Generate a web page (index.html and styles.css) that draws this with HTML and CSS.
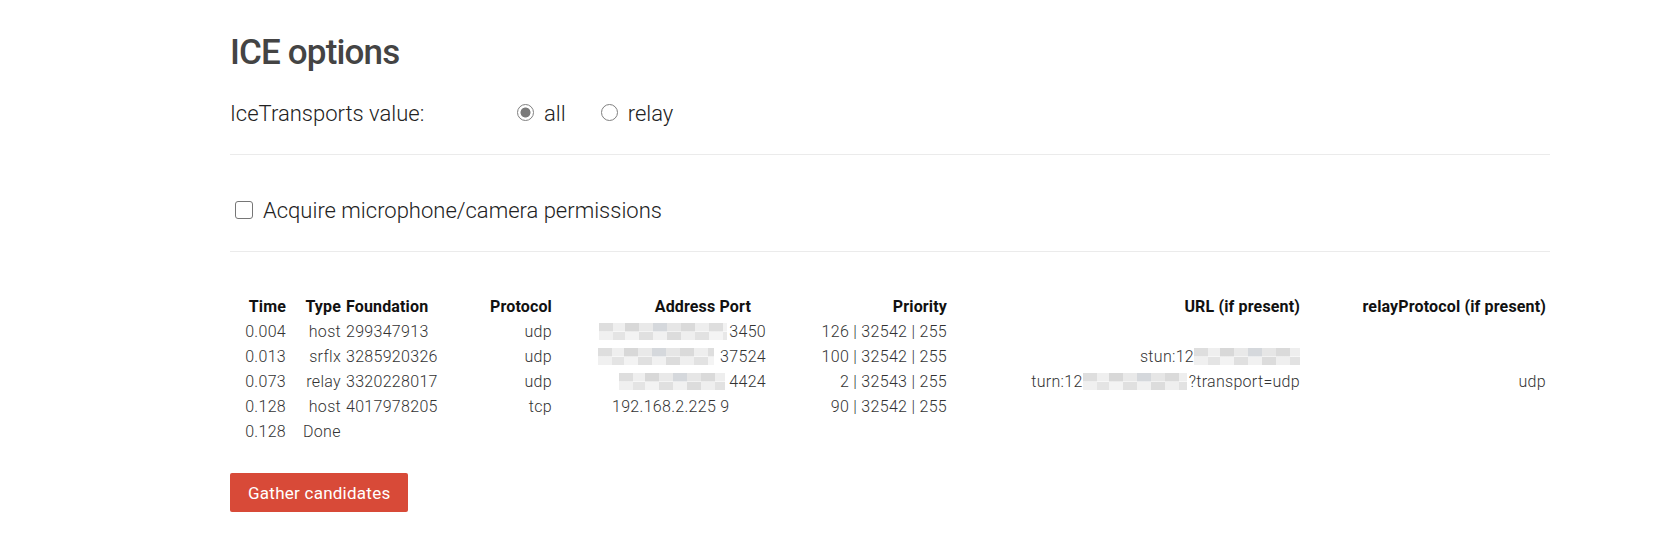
FILE: index.html
```
<!DOCTYPE html>
<html lang="en">
<head>
<meta charset="utf-8">
<title>Trickle ICE</title>
<link rel="stylesheet" href="styles.css">
</head>
<body>
<div class="container">
  <h2 class="title">ICE options</h2>
  <div class="option-row">
    <span class="option-label">IceTransports value:</span>
    <label class="choice"><input type="radio" name="transport" class="radio" checked><span>all</span></label>
    <label class="choice"><input type="radio" name="transport" class="radio"><span>relay</span></label>
  </div>
  <hr class="rule rule-1">
  <label class="check-row"><input type="checkbox" class="check"><span>Acquire microphone/camera permissions</span></label>
  <hr class="rule rule-2">
  <table class="candidates">
    <colgroup>
      <col class="c-time"><col class="c-type"><col class="c-found"><col class="c-proto"><col class="c-addr"><col class="c-prio"><col class="c-url"><col class="c-relay">
    </colgroup>
    <thead>
      <tr>
        <th class="r">Time</th>
        <th class="r">Type</th>
        <th class="l found">Foundation</th>
        <th class="r">Protocol</th>
        <th class="r addr-head">Address Port</th>
        <th class="r">Priority</th>
        <th class="r">URL (if present)</th>
        <th class="r">relayProtocol (if present)</th>
      </tr>
    </thead>
    <tbody>
      <tr>
        <td class="r">0.004</td>
        <td class="r">host</td>
        <td class="l found">299347913</td>
        <td class="r">udp</td>
        <td class="r"><span class="mosaic m-a1"></span>3450</td>
        <td class="r">126 | 32542 | 255</td>
        <td class="r"></td>
        <td class="r"></td>
      </tr>
      <tr>
        <td class="r">0.013</td>
        <td class="r">srflx</td>
        <td class="l found">3285920326</td>
        <td class="r">udp</td>
        <td class="r"><span class="mosaic m-a2"></span> 37524</td>
        <td class="r">100 | 32542 | 255</td>
        <td class="r">stun:12<span class="mosaic m-u1"></span></td>
        <td class="r"></td>
      </tr>
      <tr>
        <td class="r">0.073</td>
        <td class="r">relay</td>
        <td class="l found">3320228017</td>
        <td class="r">udp</td>
        <td class="r"><span class="mosaic m-a3"></span>4424</td>
        <td class="r">2 | 32543 | 255</td>
        <td class="r">turn:12<span class="mosaic m-u2"></span>?transport=udp</td>
        <td class="r">udp</td>
      </tr>
      <tr>
        <td class="r">0.128</td>
        <td class="r">host</td>
        <td class="l found">4017978205</td>
        <td class="r">tcp</td>
        <td class="l addr-local">192.168.2.225 9</td>
        <td class="r">90 | 32542 | 255</td>
        <td class="r"></td>
        <td class="r"></td>
      </tr>
      <tr>
        <td class="r">0.128</td>
        <td class="l done" colspan="7">Done</td>
      </tr>
    </tbody>
  </table>
  <button class="gather" type="button">Gather candidates</button>
</div>
</body>
</html>
```

FILE: styles.css
```
html, body {
  margin: 0;
  padding: 0;
  background: #ffffff;
}

body {
  font-family: Roboto, "Liberation Sans", Arial, sans-serif;
  font-weight: 300;
  color: #333333;
}

.container {
  margin-left: 230px;
  width: 1320px;
  padding-top: 33px;
}

.title {
  margin: 0;
  font-size: 35px;
  line-height: 40px;
  font-weight: 500;
  letter-spacing: -0.85px;
  color: #444444;
}

.option-row {
  display: flex;
  align-items: center;
  margin-top: 29px;
  font-size: 22px;
  line-height: 24px;
  color: #222222;
}

.option-label {
  width: 287px;
}

.choice {
  display: flex;
  align-items: center;
  gap: 10px;
  margin-right: 35px;
}

.radio {
  appearance: none;
  -webkit-appearance: none;
  box-sizing: border-box;
  width: 17px;
  height: 17px;
  margin: 0 0 4px 0;
  border: 1.5px solid #808080;
  border-radius: 50%;
  background: #ffffff;
}

.radio:checked {
  background: radial-gradient(circle, #7a7a7a 0 4.6px, #ffffff 5.4px);
}

.rule {
  margin: 0;
  border: none;
  border-top: 1px solid #ebebeb;
  height: 0;
}

.rule-1 {
  margin-top: 28px;
}

.check-row {
  display: flex;
  align-items: center;
  gap: 10px;
  margin-top: 44px;
  padding-left: 5px;
  font-size: 22px;
  line-height: 24px;
  color: #222222;
}

.check {
  appearance: none;
  -webkit-appearance: none;
  box-sizing: border-box;
  width: 18px;
  height: 18px;
  margin: 0 0 3px 0;
  border: 1.5px solid #767676;
  border-radius: 3px;
  background: #ffffff;
}

.rule-2 {
  margin-top: 28px;
}

.candidates {
  margin-top: 42px;
  table-layout: fixed;
  width: 1316px;
  border-collapse: collapse;
  border-spacing: 0;
  font-size: 16px;
  line-height: 25px;
  letter-spacing: 0.3px;
}

.c-time { width: 56px; }
.c-type { width: 55px; }
.c-found { width: 139px; }
.c-proto { width: 72px; }
.c-addr { width: 214px; }
.c-prio { width: 181px; }
.c-url { width: 353px; }
.c-relay { width: 246px; }

.candidates th,
.candidates td {
  padding: 0;
  white-space: nowrap;
  vertical-align: baseline;
}

.candidates th {
  font-weight: 700;
  color: #111111;
  letter-spacing: 0.15px;
}

.candidates td {
  font-weight: 300;
  color: #333333;
}

.r { text-align: right; }
.l { text-align: left; }

.found { padding-left: 5px !important; }
.addr-head { padding-right: 15px !important; }
.addr-local { padding-left: 60px !important; }
.done { padding-left: 17px !important; }

.mosaic {
  display: inline-block;
  height: 17px;
  vertical-align: -3px;
  background-image:
    linear-gradient(90deg, #dedede 0 14px, #efefef 14px 26px, #d8d8d8 26px 40px, #e9e9e9 40px 54px, #d5d8dc 54px 68px, #e6e6e6 68px 82px, #dadada 82px 96px, #eeeeee 96px 110px, #dedede 110px 124px, #f2f2f2 124px),
    linear-gradient(90deg, #f0f0f0 0 14px, #e4e4e4 14px 26px, #f3f3f3 26px 40px, #e0e0e0 40px 54px, #f1f1f1 54px 68px, #dcdcdc 68px 82px, #efefef 82px 96px, #e2e2e2 96px 110px, #f4f4f4 110px 124px, #e8e8e8 124px);
  background-size: 100% 50%, 100% 50%;
  background-position: 0 0, 0 100%;
  background-repeat: no-repeat;
}

.m-a1 { width: 128px; margin-right: 2px; }
.m-a2 { width: 116px; margin-right: 2px; }
.m-a3 { width: 106px; margin-right: 4px; }
.m-u1 { width: 106px; }
.m-u2 { width: 104px; margin-right: 2px; }

.gather {
  display: block;
  margin-top: 29px;
  box-sizing: border-box;
  height: 39px;
  padding: 0 18px;
  border: none;
  border-radius: 2px;
  background: #d84a38;
  color: #ffffff;
  font-family: Roboto, "Liberation Sans", Arial, sans-serif;
  font-weight: 400;
  font-size: 17px;
  line-height: 20px;
  letter-spacing: 0.25px;
}
```
